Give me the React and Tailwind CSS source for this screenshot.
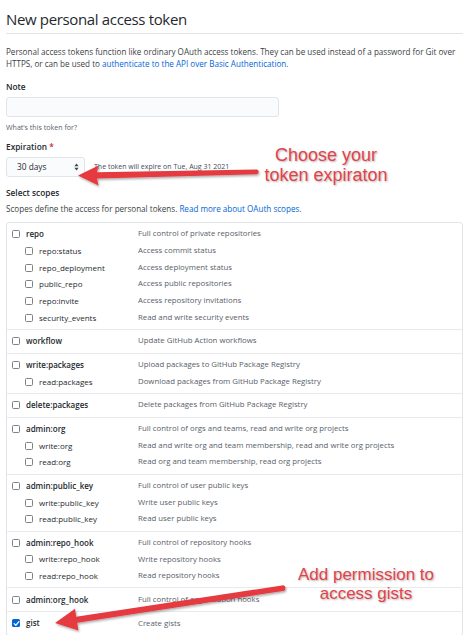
import React from "react";

const groups = [
  [
    ["repo", "Full control of private repositories"],
    ["repo:status", "Access commit status"],
    ["repo_deployment", "Access deployment status"],
    ["public_repo", "Access public repositories"],
    ["repo:invite", "Access repository invitations"],
    ["security_events", "Read and write security events"],
  ],
  [["workflow", "Update GitHub Action workflows"]],
  [
    ["write:packages", "Upload packages to GitHub Package Registry"],
    ["read:packages", "Download packages from GitHub Package Registry"],
  ],
  [["delete:packages", "Delete packages from GitHub Package Registry"]],
  [
    ["admin:org", "Full control of orgs and teams, read and write org projects"],
    ["write:org", "Read and write org and team membership, read and write org projects"],
    ["read:org", "Read org and team membership, read org projects"],
  ],
  [
    ["admin:public_key", "Full control of user public keys"],
    ["write:public_key", "Write user public keys"],
    ["read:public_key", "Read user public keys"],
  ],
  [
    ["admin:repo_hook", "Full control of repository hooks"],
    ["write:repo_hook", "Write repository hooks"],
    ["read:repo_hook", "Read repository hooks"],
  ],
  [["admin:org_hook", "Full control of organization hooks"]],
  [["gist", "Create gists", true]],
];

function Checkbox({ checked }) {
  if (checked) {
    return (
      <span className="flex h-[8px] w-[8px] shrink-0 items-center justify-center rounded-[1.5px] bg-[#0366d6]">
        <svg width="7" height="7" viewBox="0 0 8 8">
          <path d="M1.3 4.2 L3.2 6 L6.8 1.9" fill="none" stroke="#fff" strokeWidth="1.4" strokeLinecap="round" strokeLinejoin="round" />
        </svg>
      </span>
    );
  }
  return <span className="block h-[8px] w-[8px] shrink-0 rounded-[1.5px] border border-[#7d8287] bg-white" />;
}

function Row({ name, desc, checked, sub }) {
  return (
    <div className="flex h-[16.67px] items-center">
      <div className={"flex w-[131px] shrink-0 items-center gap-[6px] " + (sub ? "pl-[18px]" : "pl-[5px]")}>
        <Checkbox checked={checked} />
        <span className={"whitespace-nowrap text-[8px] text-[#24292e] " + (sub ? "font-normal" : "font-semibold")}>{name}</span>
      </div>
      <span className="whitespace-nowrap text-[7.8px] text-[#586069]">{desc}</span>
    </div>
  );
}

export default function App() {
  return (
    <div className="relative h-[635px] w-[474px] overflow-hidden bg-white font-['Open_Sans',sans-serif] text-[#24292e]">
      <div className="w-[463px] pl-[6px]">
        <h1 className="border-b border-[#e1e4e8] pb-[3px] pt-[8px] text-[15px] font-normal leading-[22px] tracking-[-0.35px] text-[#24292e]">
          New personal access token
        </h1>
        <p className="mt-[12px] whitespace-nowrap text-[8.1px] leading-[12px] text-[#3a3f44]">
          Personal access tokens function like ordinary OAuth access tokens. They can be used instead of a password for Git over
          <br />
          HTTPS, or can be used to <span className="text-[#0366d6]">authenticate to the API over Basic Authentication</span>.
        </p>

        <div className="mt-[11px] text-[8.3px] font-semibold leading-[12px]">Note</div>
        <div className="mt-[4px] h-[20px] w-[273px] rounded-[3px] border border-[#e1e4e8] bg-[#fafbfc]" />
        <div className="mt-[5px] text-[7.1px] leading-[10px] text-[#586069]">What’s this token for?</div>

        <div className="mt-[9px] text-[8.3px] font-semibold leading-[12px]">
          Expiration <span className="text-[#cb2431]">*</span>
        </div>
        <div className="mt-[4px] flex h-[20px] items-center">
          <div className="flex h-[20px] w-[79px] items-center justify-between rounded-[3px] border border-[#e1e4e8] bg-[#fafbfc] pl-[10px] pr-[5px]">
            <span className="text-[8.3px] text-[#24292e]">30 days</span>
            <svg width="5" height="8" viewBox="0 0 5 8">
              <path d="M2.5 0.5 L4.6 3.2 L0.4 3.2 Z" fill="#444" />
              <path d="M2.5 7.5 L4.6 4.8 L0.4 4.8 Z" fill="#444" />
            </svg>
          </div>
          <span className="ml-[9px] text-[7px] text-[#444d56]">The token will expire on Tue, Aug 31 2021</span>
        </div>

        <div className="mt-[10px] text-[8.3px] font-semibold leading-[12px]">Select scopes</div>
        <div className="mt-[4px] text-[8.1px] leading-[12px] text-[#3a3f44]">
          Scopes define the access for personal tokens. <span className="text-[#0366d6]">Read more about OAuth scopes.</span>
        </div>

        <div className="mt-[7px] rounded-[3px] border border-[#e1e4e8]">
          {groups.map((g, gi) => (
            <div key={gi} className={"py-[3px] " + (gi > 0 ? "border-t border-[#e8eaed]" : "")}>
              {g.map((r, ri) => (
                <Row key={r[0]} name={r[0]} desc={r[1]} checked={!!r[2]} sub={ri > 0} />
              ))}
            </div>
          ))}
        </div>
      </div>

      <svg className="pointer-events-none absolute left-0 top-0" width="474" height="635" viewBox="0 0 474 635">
        <defs>
          <filter id="sh" x="-20%" y="-50%" width="140%" height="200%">
            <feDropShadow dx="1" dy="1.5" stdDeviation="1.3" floodColor="#000" floodOpacity="0.35" />
          </filter>
        </defs>
        <g filter="url(#sh)" fill="#e53a40">
          <path d="M78 175.5 L98.5 165.5 L97 172.3 L257 169.6 Q260.5 171.8 257 174.2 L97 178.6 L98.5 185.5 Z" />
          <path d="M55 623 L75 608.8 L76.2 616.7 L283.6 585.3 Q287 587.5 284.4 590.7 L77.2 622.7 L78.4 630.6 Z" />
        </g>
      </svg>

      <div className="pointer-events-none absolute left-[258px] top-[145px] w-[136px] text-center font-['Liberation_Sans',sans-serif] text-[18px] leading-[20px] text-[#e2434b] [text-shadow:1px_1px_2px_rgba(0,0,0,0.3)]">
        Choose your
        <br />
        token expiraton
      </div>

      <div className="pointer-events-none absolute left-[284px] top-[565px] w-[164px] text-center font-['Liberation_Sans',sans-serif] text-[17px] leading-[19px] text-[#e2434b] [text-shadow:1px_1px_2px_rgba(0,0,0,0.3)]">
        Add permission to
        <br />
        access gists
      </div>
    </div>
  );
}
